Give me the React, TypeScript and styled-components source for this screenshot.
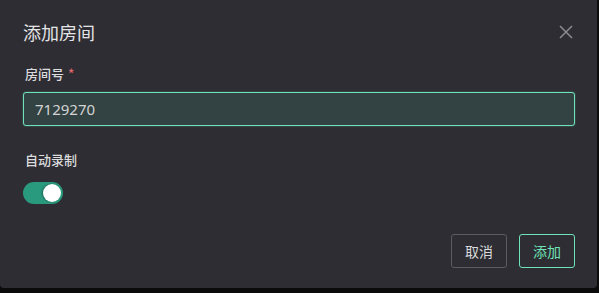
import styled, { createGlobalStyle } from "styled-components";
import { useState } from "react";

const GlobalStyle = createGlobalStyle`
  html, body {
    margin: 0;
    padding: 0;
    background: #0b0b0c;
    font-family: "Noto Sans CJK SC", "Noto Sans", sans-serif;
  }
`;

const Dialog = styled.div`
  width: 597px;
  height: 288px;
  background: #2d2d33;
  border-radius: 0 0 4px 4px;
  box-sizing: border-box;
  padding: 0 22px 0 23px;
  display: flex;
  flex-direction: column;
`;

const Header = styled.div`
  display: flex;
  align-items: center;
  justify-content: space-between;
  height: 64px;
`;

const Title = styled.h2`
  margin: 0;
  font-size: 18px;
  font-weight: 400;
  color: #e4e4e6;
`;

const Close = styled.button`
  border: none;
  background: transparent;
  padding: 0;
  margin-right: 1px;
  width: 16px;
  height: 16px;
  display: flex;
  align-items: center;
  justify-content: center;
  cursor: pointer;
  svg {
    display: block;
  }
`;

const Field = styled.div<{ $gap: number }>`
  display: flex;
  flex-direction: column;
  align-items: flex-start;
  margin-bottom: ${(p) => p.$gap}px;
`;

const Label = styled.label`
  font-size: 13px;
  font-weight: 500;
  color: #dcdcde;
  padding-left: 2px;
  height: 20px;
  line-height: 20px;
  margin-bottom: 8px;
  span {
    color: #e0686a;
    margin-left: 4px;
  }
`;

const Input = styled.input`
  align-self: stretch;
  height: 34px;
  box-sizing: border-box;
  background: #334242;
  border: 1px solid #6fe2b7;
  border-radius: 3px;
  box-shadow: 0 0 2px rgba(111, 226, 183, 0.45);
  color: #d4d4d4;
  font-family: "Noto Sans", sans-serif;
  font-size: 15px;
  padding: 0 11px;
  outline: none;
`;

const Track = styled.button<{ $on: boolean }>`
  width: 40px;
  height: 22px;
  margin-top: 4px;
  border-radius: 11px;
  border: none;
  padding: 2px;
  background: ${(p) => (p.$on ? "#2a9a7e" : "#555")};
  display: flex;
  justify-content: ${(p) => (p.$on ? "flex-end" : "flex-start")};
  align-items: center;
  cursor: pointer;
  box-sizing: border-box;
`;

const Knob = styled.span`
  width: 18px;
  height: 18px;
  border-radius: 50%;
  background: #ffffff;
  box-shadow: -1px 0 2px rgba(0, 0, 0, 0.35);
`;

const Footer = styled.div`
  margin-top: auto;
  margin-bottom: 20px;
  display: flex;
  justify-content: flex-end;
  gap: 12px;
`;

const Button = styled.button<{ $primary?: boolean }>`
  width: 56px;
  height: 34px;
  border-radius: 3px;
  background: transparent;
  font-family: "Noto Sans CJK SC", sans-serif;
  font-size: 14px;
  border: 1px solid ${(p) => (p.$primary ? "#6fe2b7" : "#5b5b60")};
  color: ${(p) => (p.$primary ? "#6fe2b7" : "#dadadc")};
  cursor: pointer;
`;

export default function App() {
  const [on, setOn] = useState(true);
  return (
    <>
      <GlobalStyle />
      <Dialog>
        <Header>
          <Title>添加房间</Title>
          <Close aria-label="close">
            <svg width="14" height="14" viewBox="0 0 14 14">
              <path d="M1 1 L13 13 M13 1 L1 13" stroke="#8c8c90" strokeWidth="1.5" />
            </svg>
          </Close>
        </Header>
        <Field $gap={24}>
          <Label>
            房间号<span>*</span>
          </Label>
          <Input defaultValue="7129270" />
        </Field>
        <Field $gap={0}>
          <Label>自动录制</Label>
          <Track $on={on} onClick={() => setOn(!on)}>
            <Knob />
          </Track>
        </Field>
        <Footer>
          <Button>取消</Button>
          <Button $primary>添加</Button>
        </Footer>
      </Dialog>
    </>
  );
}
